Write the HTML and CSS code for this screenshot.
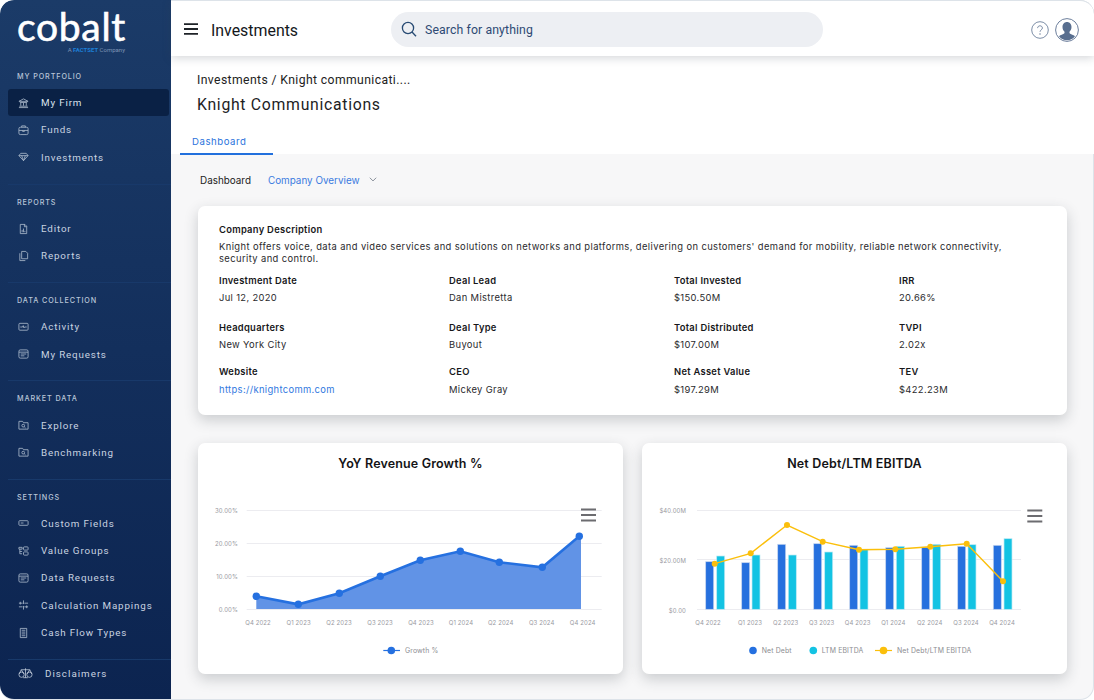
FILE: index.html
```html
<!DOCTYPE html>
<html lang="en">
<head>
<meta charset="utf-8">
<title>Knight Communications</title>
<link rel="stylesheet" href="styles.css">
</head>
<body>
<div class="window">
  <aside class="sidebar">
    <div class="logo">
      <div class="logo-word">cobalt</div>
      <div class="logo-sub">A <b>FACTSET</b> Company</div>
    </div>
    <section class="nav-group first">
      <div class="nav-label">MY PORTFOLIO</div>
      <a class="nav-item active"><svg class="ico" viewBox="0 0 12 12"><path d="M1 4.200 6 1.500l5 2.700zM2 5.500h8M3 6v3M6 6v3M9 6v3M1.500 9.500h9M1 11h10"/></svg><span>My Firm</span></a>
      <a class="nav-item"><svg class="ico" viewBox="0 0 12 12"><rect x="1" y="3" width="10" height="8" rx="1.500"/><path d="M4 3V1.500h4V3M1 6.500h10M5 6.500v1h2v-1"/></svg><span>Funds</span></a>
      <a class="nav-item"><svg class="ico" viewBox="0 0 12 12"><path d="M3 2h6l2 2.500L6 10 1 4.500zM1 4.500h10M4 4.500 6 10l2-5.500"/></svg><span>Investments</span></a>
    </section>
    <section class="nav-group">
      <div class="nav-label">REPORTS</div>
      <a class="nav-item"><svg class="ico" viewBox="0 0 12 12"><path d="M2.500 11V1h5l2 2v8zM7 1v2.500h2.500M4.500 9.500V7M6 9.500V5.500M7.500 9.500V8"/></svg><span>Editor</span></a>
      <a class="nav-item"><svg class="ico" viewBox="0 0 12 12"><path d="M4 9V1h4.500L10.500 3v6zM2 3v8h6"/></svg><span>Reports</span></a>
    </section>
    <section class="nav-group">
      <div class="nav-label">DATA COLLECTION</div>
      <a class="nav-item"><svg class="ico" viewBox="0 0 12 12"><rect x="1" y="2" width="10" height="7.500" rx="1"/><path d="M2.500 6h2.500l.7-1.500.8 2.500.6-1h2.400"/></svg><span>Activity</span></a>
      <a class="nav-item"><svg class="ico" viewBox="0 0 12 12"><rect x="1" y="1.500" width="10" height="9" rx="1.500"/><path d="M1 4h10M3 6h6M3 8h4"/></svg><span>My Requests</span></a>
    </section>
    <section class="nav-group">
      <div class="nav-label">MARKET DATA</div>
      <a class="nav-item"><svg class="ico" viewBox="0 0 12 12"><path d="M1 10.500V2h4l1 1.500h5v7z"/><circle cx="5.700" cy="6.700" r="1.500"/><path d="m6.800 7.800 1.400 1.400"/></svg><span>Explore</span></a>
      <a class="nav-item"><svg class="ico" viewBox="0 0 12 12"><path d="M1 10.500V2h4l1 1.500h5v7z"/><circle cx="5.700" cy="6.700" r="1.500"/><path d="m6.800 7.800 1.400 1.400"/></svg><span>Benchmarking</span></a>
    </section>
    <section class="nav-group">
      <div class="nav-label">SETTINGS</div>
      <a class="nav-item"><svg class="ico" viewBox="0 0 12 12"><rect x="1" y="3.500" width="10" height="5" rx=".8"/><path d="M3 6h3"/></svg><span>Custom Fields</span></a>
      <a class="nav-item"><svg class="ico" viewBox="0 0 12 12"><path d="M1 2h3.500v2H1zM2 4v5h2.500M2 6.500h2.500"/><rect x="6" y="1.500" width="5" height="3.500" rx=".8"/><rect x="6" y="7" width="5" height="3.500" rx=".8"/></svg><span>Value Groups</span></a>
      <a class="nav-item"><svg class="ico" viewBox="0 0 12 12"><rect x="1" y="1.500" width="10" height="9" rx="1.500"/><path d="M1 4h10M3 6h6M3 8h4"/></svg><span>Data Requests</span></a>
      <a class="nav-item"><svg class="ico" viewBox="0 0 12 12"><path d="M1 4h4M7 4h4M1 8h4M7 8h4M6 1v4M6 7v4M2.500 2.500v3M9.500 6.500v3"/></svg><span>Calculation Mappings</span></a>
      <a class="nav-item"><svg class="ico" viewBox="0 0 12 12"><path d="M2.500 1h7v10h-7zM4 3h4M4 5h4M4 7h4M4 9h4"/></svg><span>Cash Flow Types</span></a>
    </section>
    <a class="nav-footer"><svg class="ico-wide" viewBox="0 0 16 12"><path d="M8 1v10M5.500 11h5M3.500 2.500h9"/><circle cx="3.800" cy="7.800" r="2.800"/><circle cx="12.200" cy="7.800" r="2.800"/><path d="M3.500 2.500 1.200 7M3.500 2.500 6.400 7M12.500 2.500 9.600 7M12.500 2.500 14.800 7"/></svg><span>Disclaimers</span></a>
  </aside>

  <main class="main">
    <header class="topbar">
      <svg class="menu-ico" viewBox="0 0 14 12"><path d="M0 1.200h14M0 6h14M0 10.800h14"/></svg>
      <div class="topbar-title">Investments</div>
      <div class="search">
        <svg class="search-ico" viewBox="0 0 16 16"><circle cx="7" cy="7" r="5.600"/><path d="m11 11 4 4.300"/></svg>
        <span class="search-text">Search for anything</span>
      </div>
      <div class="top-actions">
        <svg class="help-ico" viewBox="0 0 18 18"><circle cx="9" cy="9" r="8.300"/><path d="M6.600 7.100C6.700 5.600 7.700 4.800 9 4.800s2.400.9 2.400 2.200c0 1.900-2.400 1.900-2.400 3.800"/><circle class="dot" cx="9" cy="13" r=".7"/></svg>
        <svg class="user-ico" viewBox="0 0 24 24"><circle class="ring" cx="12" cy="12" r="11.400"/><path class="fig" d="M12 4c2.800 0 4.500 2.200 4.500 5 0 2-.8 3.700-2 4.700v1.300c0 .8 3 1.500 5.500 3.200a10 10 0 0 1-16 0c2.500-1.700 5.500-2.400 5.500-3.200v-1.300c-1.200-1-2-2.700-2-4.700C7.500 6.200 9.200 4 12 4z"/></svg>
      </div>
    </header>

    <div class="page-head">
      <div class="crumb">Investments / Knight communicati....</div>
      <h1 class="page-title">Knight Communications</h1>
      <div class="tabs"><div class="tab">Dashboard</div></div>
    </div>

    <div class="content">
      <div class="filters">
        <span class="filter-main">Dashboard</span>
        <span class="filter-link">Company Overview</span>
        <svg class="chev" viewBox="0 0 10 6"><path d="m1 .8 4 4 4-4"/></svg>
      </div>

      <div class="card overview">
        <div class="strong">Company Description</div>
        <p class="desc">Knight offers voice, data and video services and solutions on networks and platforms, delivering on customers' demand for mobility, reliable network connectivity, security and control.</p>
        <div class="facts">
          <div class="fact"><div class="strong">Investment Date</div><div class="val">Jul 12, 2020</div></div>
          <div class="fact"><div class="strong">Deal Lead</div><div class="val">Dan Mistretta</div></div>
          <div class="fact"><div class="strong">Total Invested</div><div class="val">$150.50M</div></div>
          <div class="fact"><div class="strong">IRR</div><div class="val">20.66%</div></div>
          <div class="fact"><div class="strong">Headquarters</div><div class="val">New York City</div></div>
          <div class="fact"><div class="strong">Deal Type</div><div class="val">Buyout</div></div>
          <div class="fact"><div class="strong">Total Distributed</div><div class="val">$107.00M</div></div>
          <div class="fact"><div class="strong">TVPI</div><div class="val">2.02x</div></div>
          <div class="fact last"><div class="strong">Website</div><div class="val link">https://knightcomm.com</div></div>
          <div class="fact last"><div class="strong">CEO</div><div class="val">Mickey Gray</div></div>
          <div class="fact last"><div class="strong">Net Asset Value</div><div class="val">$197.29M</div></div>
          <div class="fact last"><div class="strong">TEV</div><div class="val">$422.23M</div></div>
        </div>
      </div>

      <div class="charts">
        <div class="card chart-card">
          <div class="chart-title">YoY Revenue Growth %</div>
          <svg class="chart" viewBox="198 484 425 190">
            <g class="grid"><path d="M246.700 510.500H601.700M246.700 543.500H601.700M246.700 576.500H601.700M246.700 609.500H601.700"/></g>
            <g class="ylab">
              <text x="238" y="513">30.00%</text><text x="238" y="546">20.00%</text><text x="238" y="579">10.00%</text><text x="238" y="612">0.00%</text>
            </g>
            <g class="xlab">
              <text x="258" y="625">Q4 2022</text><text x="298.700" y="625">Q1 2023</text><text x="339" y="625">Q2 2023</text><text x="380" y="625">Q3 2023</text><text x="421" y="625">Q4 2023</text><text x="461" y="625">Q1 2024</text><text x="500.700" y="625">Q2 2024</text><text x="541.700" y="625">Q3 2024</text><text x="582.700" y="625">Q4 2024</text>
            </g>
            <polygon class="area" points="256.300,596.300 298.300,604.300 339.300,593.300 380.300,576.300 420.300,560.300 460.300,551.300 499.300,562.300 542.300,567.300 581,536.300 581,609 256.300,609"/>
            <polyline class="line-blue" points="256.300,596.300 298.300,604.300 339.300,593.300 380.300,576.300 420.300,560.300 460.300,551.300 499.300,562.300 542.300,567.300 579.300,536.300"/>
            <g class="dots-blue">
              <circle cx="256.300" cy="596.300" r="3.700"/><circle cx="298.300" cy="604.300" r="3.700"/><circle cx="339.300" cy="593.300" r="3.700"/><circle cx="380.300" cy="576.300" r="3.700"/><circle cx="420.300" cy="560.300" r="3.700"/><circle cx="460.300" cy="551.300" r="3.700"/><circle cx="499.300" cy="562.300" r="3.700"/><circle cx="542.300" cy="567.300" r="3.700"/><circle cx="579.300" cy="536.300" r="3.700"/>
            </g>
            <path class="burger" d="M581 509.500H596M581 515H596M581 520.500H596"/>
            <path class="legend-blue" d="M383.300 650.500H400"/>
            <circle class="fill-blue" cx="391.300" cy="650.500" r="3.800"/>
            <text class="legend" x="405" y="653.200">Growth %</text>
          </svg>
        </div>

        <div class="card chart-card">
          <div class="chart-title">Net Debt/LTM EBITDA</div>
          <svg class="chart" viewBox="642 484 425 190">
            <g class="grid"><path d="M697 510.500H1021M697 559.500H1021M697 609.500H1021"/></g>
            <g class="ylab">
              <text x="686" y="513">$40.00M</text><text x="686" y="563">$20.00M</text><text x="686" y="613">$0.00</text>
            </g>
            <g class="xlab">
              <text x="708" y="625">Q4 2022</text><text x="750" y="625">Q1 2023</text><text x="785.700" y="625">Q2 2023</text><text x="821.700" y="625">Q3 2023</text><text x="857.700" y="625">Q4 2023</text><text x="893.300" y="625">Q1 2024</text><text x="929.700" y="625">Q2 2024</text><text x="966" y="625">Q3 2024</text><text x="1002" y="625">Q4 2024</text>
            </g>
            <g class="bars-blue">
              <rect x="705.700" y="561.700" width="8" height="47.600"/><rect x="741.700" y="562.700" width="8" height="46.600"/><rect x="777.700" y="544.300" width="8" height="65"/><rect x="813.700" y="543.700" width="8" height="65.600"/><rect x="849.700" y="545.300" width="8" height="64"/><rect x="885.700" y="547.700" width="8" height="61.600"/><rect x="921.700" y="547.300" width="8" height="62"/><rect x="957.700" y="546.300" width="8" height="63"/><rect x="993.300" y="545.300" width="8" height="64"/>
            </g>
            <g class="bars-cyan">
              <rect x="716.700" y="556" width="8" height="53.300"/><rect x="752" y="555" width="8" height="54.300"/><rect x="788.300" y="555" width="8" height="54.300"/><rect x="824.700" y="552" width="8" height="57.300"/><rect x="860" y="549.300" width="8" height="60"/><rect x="896.300" y="546.300" width="8" height="63"/><rect x="932.700" y="544.300" width="8" height="65"/><rect x="968" y="544.700" width="8" height="64.600"/><rect x="1004" y="538.700" width="8" height="70.600"/>
            </g>
            <polyline class="line-gold" points="714.700,563.700 750.700,553.300 787,525 822.700,541.700 859,549.700 895.300,549.300 930.300,546.700 966.700,543.700 1003,581.300"/>
            <g class="dots-gold">
              <circle cx="714.700" cy="563.700" r="3"/><circle cx="750.700" cy="553.300" r="3"/><circle cx="787" cy="525" r="3"/><circle cx="822.700" cy="541.700" r="3"/><circle cx="859" cy="549.700" r="3"/><circle cx="895.300" cy="549.300" r="3"/><circle cx="930.300" cy="546.700" r="3"/><circle cx="966.700" cy="543.700" r="3"/><circle cx="1003" cy="581.300" r="3"/>
            </g>
            <path class="burger" d="M1027.300 510.500H1042.300M1027.300 516H1042.300M1027.300 521.500H1042.300"/>
            <circle class="fill-blue" cx="753" cy="650.500" r="3.800"/>
            <text class="legend" x="761.700" y="653.200">Net Debt</text>
            <circle class="fill-cyan" cx="813.300" cy="650.500" r="3.800"/>
            <text class="legend" x="821.700" y="653.200">LTM EBITDA</text>
            <path class="legend-gold" d="M875 650.500H892"/>
            <circle class="fill-gold" cx="883.500" cy="650.500" r="3.800"/>
            <text class="legend" x="897" y="653.200">Net Debt/LTM EBITDA</text>
          </svg>
        </div>
      </div>
    </div>
  </main>
</div>
</body>
</html>
```

FILE: styles.css
```css
* { box-sizing: border-box; }
html, body { margin: 0; padding: 0; background: #fff; }
body { font-family: "Inter", "Liberation Sans", sans-serif; }

.window {
  width: 1094px;
  height: 700px;
  display: flex;
  overflow: hidden;
  border-radius: 14px;
  background: #f7f7f8;
  box-shadow: inset 0 0 0 1px #dde3e9;
}

/* Sidebar */
.sidebar {
  width: 171px;
  flex: none;
  height: 699px;
  border-radius: 14px 0 0 14px;
  color: #c9d3e0;
  background: linear-gradient(180deg, #1b3b68 0%, #132f5c 50%, #0c2450 100%);
  font-family: "Roboto", "Liberation Sans", sans-serif;
}
.logo { height: 65px; padding: 9px 0 0 17px; width: 125px; color: #fff; }
.logo-word { font-family: "Lato", sans-serif; font-size: 39px; line-height: 35px; letter-spacing: .7px; font-weight: 400; -webkit-text-stroke: .6px #fff; white-space: nowrap; }
.logo-sub { font-size: 6px; line-height: 8px; text-align: right; color: #7d94b4; margin-top: 2px; white-space: nowrap; }
.logo-sub b { color: #1c7fd6; font-weight: 700; }

.nav-group { padding: 12px 0 12.700px; border-bottom: 1px solid #18396a; margin-left: 8px; }
.nav-group.first { padding-top: 6px; padding-bottom: 13px; }
.nav-label { font-size: 7.200px; line-height: 12px; font-weight: 500; letter-spacing: .9px; color: #b9c6d8; padding-left: 9px; margin-bottom: 6px; font-family: "Inter", sans-serif; }
.nav-item { height: 27.300px; display: flex; align-items: center; gap: 12px; padding-left: 10px; font-size: 9.800px; letter-spacing: .85px; font-weight: 400; width: 161px; }
.nav-item.active { background: #0a2145; border-radius: 3px; color: #dbe3ed; }
.ico { width: 11px; height: 12px; flex: none; fill: none; stroke: #aab8cb; stroke-width: .9; }
.nav-footer { height: 27px; display: flex; align-items: center; gap: 12px; padding-left: 18px; font-size: 9.800px; letter-spacing: 1px; font-weight: 400; }
.ico-wide { width: 15px; height: 12px; flex: none; fill: none; stroke: #c9d3e0; stroke-width: .8; }

/* Main */
.main { flex: 1; min-width: 0; display: flex; flex-direction: column; }
.topbar {
  height: 56px;
  flex: none;
  display: flex;
  align-items: center;
  background: #fff;
  padding: 1px 0 0 13px;
  position: relative;
  z-index: 2;
  box-shadow: 0 2px 10px rgba(60, 70, 80, .22);
  border-top: 1px solid #dde3e9;
  border-radius: 0 14px 0 0;
}
.menu-ico { width: 14px; height: 12px; fill: none; stroke: #1f2328; stroke-width: 1.800; flex: none; }
.topbar-title { font-family: "Roboto", sans-serif; font-size: 15.900px; color: #14171b; margin-left: 13px; width: 180px; padding-top: 2px; }
.search {
  width: 432px;
  height: 35px;
  border-radius: 18px;
  background: #edeff3;
  display: flex;
  align-items: center;
  gap: 8px;
  padding-left: 10px;
  font-family: "Roboto", sans-serif;
  font-size: 12.300px;
  color: #2e4a73;
  letter-spacing: .1px;
}
.search-text { padding-top: 2px; }
.search-ico { width: 16px; height: 16px; fill: none; stroke: #274a73; stroke-width: 1.300; }
.top-actions { margin-left: auto; margin-top: 2px; display: flex; align-items: center; gap: 6px; padding-right: 15px; }
.help-ico { width: 18px; height: 18px; fill: none; stroke: #5c7191; stroke-width: .8; }
.help-ico .dot { fill: #5c7191; stroke: none; }
.user-ico { width: 24px; height: 24px; }
.user-ico .ring { fill: #fff; stroke: #5c7191; stroke-width: .9; }
.user-ico .fig { fill: #586e8f; }

.page-head { background: #fff; flex: none; height: 98px; padding: 17px 0 0 26px; display: flex; flex-direction: column; color: #222; }
.crumb { font-size: 12.200px; line-height: 14px; letter-spacing: .39px; font-family: "Roboto", sans-serif; }
.page-title { margin: 6px 0 0; font: 400 15.800px/24px "Roboto", sans-serif; letter-spacing: .7px; color: #1d1d1f; }
.tabs { margin: 14px 0 0 -17px; }
.tab { width: 93px; height: 24px; padding: 4px 0 0 12px; font-size: 9.600px; line-height: 14px; color: #2a73dc; letter-spacing: .55px; border-bottom: 2px solid #2270dd; font-family: "Inter", sans-serif; }

.content { flex: 1; padding: 0 27px; min-height: 0; }
.filters { height: 51px; margin-bottom: 1px; display: flex; align-items: center; font-size: 9.900px; padding: 0 0 0 2px; font-family: "Inter", sans-serif; }
.filter-main { color: #222; margin-right: 17px; }
.filter-link { color: #3b7be0; margin-right: 9px; }
.chev { width: 8px; height: 5px; fill: none; stroke: #6e7784; stroke-width: 1; }

.card { background: #fff; border-radius: 7px; box-shadow: 0 5px 14px rgba(40, 50, 60, .22); }
.overview { width: 869px; height: 209px; padding: 18px 21px 0; font-size: 9.400px; color: #2a2a2d; line-height: 12px; }
.strong { font-weight: 600; color: #17171a; letter-spacing: .28px; }
.desc { margin: 5px 0 0; letter-spacing: .4px; width: 800px; }
.facts { display: grid; grid-template-columns: 230px 225px 225px 1fr; margin-top: 10px; }
.fact { height: 47px; }
.fact .val { letter-spacing: .35px; }
.fact.last { height: 40px; margin-top: -3px; }
.val { margin-top: 5px; }
.fact.last .val { margin-top: 6px; }
.link { color: #2f78e0; }

.charts { display: flex; gap: 19px; margin-top: 28px; }
.chart-card { width: 425px; height: 231px; }
.chart-title { height: 41px; padding-top: 12px; text-align: center; font-size: 12.500px; line-height: 17px; font-weight: 600; color: #141416; letter-spacing: .15px; }
.chart { display: block; width: 425px; height: 190px; font-family: "Inter", sans-serif; }
.grid path { stroke: #ececf0; stroke-width: 1; fill: none; }
.ylab text { font-size: 6px; fill: #9a9a9f; text-anchor: end; letter-spacing: .1px; }
.xlab text { font-size: 6px; fill: #9a9a9f; text-anchor: middle; letter-spacing: .1px; }
.area { fill: #6193e6; }
.line-blue { fill: none; stroke: #2570e0; stroke-width: 2.600; }
.dots-blue circle, .fill-blue { fill: #2570e0; }
.fill-cyan { fill: #13c3e3; }
.fill-gold { fill: #fbbf0b; }
.burger { stroke: #6c6c70; stroke-width: 2; fill: none; }
.legend { font-size: 6.900px; fill: #8d8d92; letter-spacing: .15px; }
.legend-blue { stroke: #2570e0; stroke-width: 1.200; }
.legend-gold { stroke: #fbbf0b; stroke-width: 1.200; }
.bars-blue rect { fill: #2670de; stroke: #c7d6ef; stroke-width: .7; }
.bars-cyan rect { fill: #13c3e3; stroke: #bfeaf4; stroke-width: .7; }
.line-gold { fill: none; stroke: #fbbf0b; stroke-width: 1.400; }
.dots-gold circle { fill: #fbbf0b; }
```
